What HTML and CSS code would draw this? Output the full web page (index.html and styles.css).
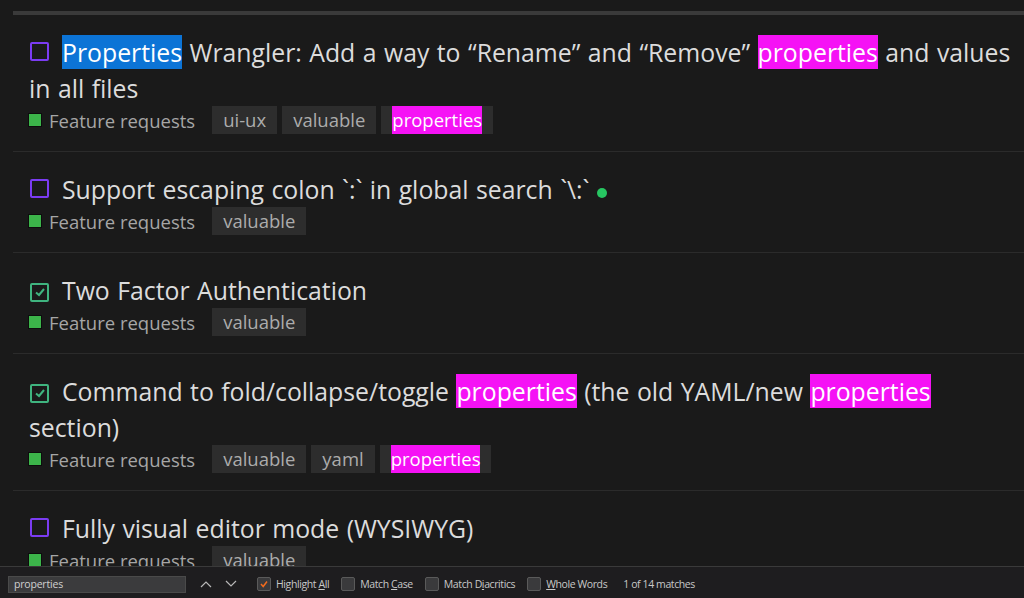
FILE: index.html
```html
<!DOCTYPE html>
<html lang="en">
<head>
<meta charset="utf-8">
<title>Feature requests</title>
<link rel="stylesheet" href="styles.css">
</head>
<body>
<div class="page">
	<div class="topBar"></div>
	<!-- task list -->
	<div class="task">
		<p class="title"><span class="box"></span><span class="hl cur">Properties</span> Wrangler: Add a way to “Rename” and “Remove” <span class="hl">properties</span> and values in all files</p>
		<div class="meta"><span class="dot"></span><span class="cat">Feature requests</span><span class="tag">ui-ux</span><span class="tag">valuable</span><span class="tag"><span class="tagHl">properties</span></span></div>
	</div>
	<div class="task">
		<p class="title"><span class="box"></span>Support escaping colon `:` in global search `\:` <span class="live"></span></p>
		<div class="meta"><span class="dot"></span><span class="cat">Feature requests</span><span class="tag">valuable</span></div>
	</div>
	<div class="task">
		<p class="title"><span class="box done"><svg viewBox="0 0 14 14" width="14" height="14"><polyline points="3,7.5 6,10 11,4" fill="none" stroke="#3fb47f" stroke-width="2"/></svg></span>Two Factor Authentication</p>
		<div class="meta"><span class="dot"></span><span class="cat">Feature requests</span><span class="tag">valuable</span></div>
	</div>
	<div class="task">
		<p class="title"><span class="box done"><svg viewBox="0 0 14 14" width="14" height="14"><polyline points="3,7.5 6,10 11,4" fill="none" stroke="#3fb47f" stroke-width="2"/></svg></span>Command to fold/collapse/toggle <span class="hl">properties</span> (the old YAML/new <span class="hl">properties</span> section)</p>
		<div class="meta"><span class="dot"></span><span class="cat">Feature requests</span><span class="tag">valuable</span><span class="tag">yaml</span><span class="tag"><span class="tagHl">properties</span></span></div>
	</div>
	<div class="task">
		<p class="title"><span class="box"></span>Fully visual editor mode (WYSIWYG)</p>
		<div class="meta"><span class="dot"></span><span class="cat">Feature requests</span><span class="tag">valuable</span></div>
	</div>
</div>
<!-- find bar -->
<div class="findBar">
	<div class="findInput">properties</div>
	<svg class="arrow" viewBox="0 0 12 8" width="12" height="8"><polyline points="1,7 6,2 11,7" fill="none" stroke="#b8b8b8" stroke-width="1.2"/></svg>
	<svg class="arrow" viewBox="0 0 12 8" width="12" height="8"><polyline points="1,1 6,6 11,1" fill="none" stroke="#b8b8b8" stroke-width="1.2"/></svg>
	<label class="opt"><span class="chk on"><svg viewBox="0 0 10 10" width="10" height="10"><polyline points="2,5 4.2,7.5 8,2.5" fill="none" stroke="#f26b1d" stroke-width="1.5"/></svg></span><span>Highlight <u>A</u>ll</span></label>
	<label class="opt"><span class="chk"></span><span>Match <u>C</u>ase</span></label>
	<label class="opt"><span class="chk"></span><span>Match D<u>i</u>acritics</span></label>
	<label class="opt"><span class="chk"></span><span><u>W</u>hole Words</span></label>
	<span class="count">1 of 14 matches</span>
</div>
</body>
</html>
```
FILE: styles.css
```css
html,body{
	margin:0;
	height:100%;
	overflow:hidden;
	background:#1a1a1a;
}
.page{
	padding:11px 0 0 13px;
	font-family:"Open Sans",sans-serif;
	color:#dcdcdc;
}
.topBar{
	height:4px;
	background:#3a3a3a;
}
.task{
	padding:19px 6px 17px 16px;
	border-bottom:1px solid #2b2b2b;
}
.title{
	margin:0;
	font-size:24.8px;
	line-height:36px;
	word-spacing:1px;
}
.box{
	display:inline-flex;
	align-items:center;
	justify-content:center;
	box-sizing:border-box;
	width:19px;
	height:19px;
	margin:0 13px 0 1px;
	border:2px solid #7b3cf2;
	border-radius:2px;
	vertical-align:1px;
}
.box.done{
	border-color:#3fb47f;
}
.hl{
	background:#f512f5;
	color:#fff;
}
.hl.cur{
	background:#0c74d6;
}
.live{
	display:inline-block;
	width:10px;
	height:10px;
	border-radius:50%;
	background:#27c662;
	vertical-align:1px;
}
.meta{
	display:flex;
	align-items:center;
	height:28px;
	font-size:18.5px;
}
.dot{
	width:12px;
	height:12px;
	background:#3cb44a;
	border:1px solid #0d0d0d;
	margin:0 7px 0 -1px;
}
.cat{
	color:#a6a6a6;
	margin-right:17px;
}
.tag{
	height:28px;
	line-height:28px;
	padding:0 11px;
	margin-right:5px;
	background:#2d2d2d;
	color:#acacac;
}
.tagHl{
	display:inline-block;
	background:#f512f5;
	color:#fff;
}
.findBar{
	position:fixed;
	left:0;
	right:0;
	bottom:0;
	box-sizing:border-box;
	height:32px;
	display:flex;
	align-items:center;
	padding:3px 0 0 8px;
	background:#1e1d1f;
	border-top:1px solid #3a3a3a;
	font-family:"Open Sans",sans-serif;
	font-size:10.5px;
	color:#c8c8c8;
}
.findInput{
	box-sizing:border-box;
	width:178px;
	height:17px;
	line-height:15px;
	padding:0 5px;
	background:#3b3b3d;
	border:1px solid #4a4a4a;
	color:#d0d0d0;
	letter-spacing:-0.2px;
}
.arrow{
	margin-left:14px;
}
.arrow+.arrow{
	margin-left:13px;
	margin-right:8px;
}
.opt{
	display:flex;
	align-items:center;
	margin-left:12px;
	letter-spacing:-0.4px;
}
.chk{
	display:inline-flex;
	align-items:center;
	justify-content:center;
	box-sizing:border-box;
	width:14px;
	height:14px;
	margin-right:5px;
	background:#3a3a3c;
	border:1px solid #5a5a5a;
	border-radius:2px;
}
.count{
	margin-left:16px;
	letter-spacing:-0.4px;
}
```
